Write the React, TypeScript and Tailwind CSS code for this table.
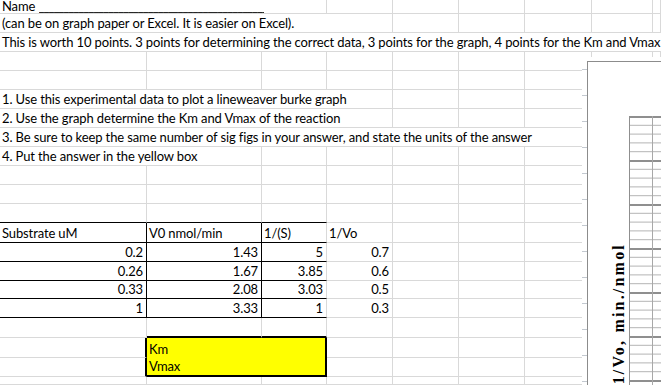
import React from "react";

// column widths, A..I
const W = ["w-[147px]", "w-[115px]", "w-[65px]", "w-[66px]", "w-[66px]", "w-[66px]", "w-[67px]", "w-[61px]", "flex-1"];

type Edge = "g" | "k" | "k2" | "n";
type CellSpec = { t?: React.ReactNode; a?: "l" | "r"; r?: Edge; b?: Edge; y?: boolean; tight?: boolean };
type RowSpec = { h: string; c: Record<number, CellSpec> };

const rightCls: Record<Edge, string> = {
  g: "border-r border-r-[#d9d9d9]",
  k: "border-r border-r-black",
  k2: "border-r-2 border-r-black",
  n: "",
};
const bottomCls: Record<Edge, string> = {
  g: "border-b border-b-[#d9d9d9]",
  k: "border-b border-b-black",
  k2: "border-b-2 border-b-black",
  n: "",
};

// hide the first n column lines (text runs over them)
const over = (n: number, first: CellSpec): Record<number, CellSpec> => {
  const c: Record<number, CellSpec> = { 0: { ...first, r: "n" } };
  for (let i = 1; i < n; i++) c[i] = { r: "n" };
  return c;
};

const tbl = (i: number): CellSpec => ({ b: "k", r: i < 2 ? "k" : "g" });

const rows: RowSpec[] = [
  {
    h: "h-[14px]",
    c: over(2, {
      tight: true,
      t: (
        <>
          Name{" "}
          <span className="inline-block w-[225px] overflow-x-clip tracking-[-1px] align-baseline">
            ____________________________________________________
          </span>
        </>
      ),
    }),
  },
  { h: "h-[19px]", c: over(3, { t: "(can be on graph paper or Excel. It is easier on Excel)." }) },
  {
    h: "h-[19px]",
    c: over(9, {
      t: "This is worth 10 points. 3 points for determining the correct data, 3 points for the graph, 4 points for the Km and Vmax",
    }),
  },
  { h: "h-[19px]", c: {} },
  { h: "h-[19px]", c: {} },
  { h: "h-[19px]", c: over(3, { t: "1. Use this experimental data to plot a lineweaver burke graph" }) },
  { h: "h-[19px]", c: over(3, { t: "2. Use the graph determine the Km and Vmax of the reaction" }) },
  {
    h: "h-[19px]",
    c: over(6, { t: "3. Be sure to keep the same number of sig figs in your answer, and state the units of the answer" }),
  },
  { h: "h-[19px]", c: over(1, { t: "4. Put the answer in the yellow box" }) },
  { h: "h-[19px]", c: {} },
  { h: "h-[19px]", c: {} },
  { h: "h-[19px]", c: { 0: { b: "k" }, 1: { b: "k" }, 2: { b: "k" } } },
  {
    h: "h-[20px]",
    c: {
      0: { ...tbl(0), t: "Substrate uM" },
      1: { ...tbl(1), t: "V0 nmol/min" },
      2: { ...tbl(2), t: "1/(S)" },
      3: { t: "1/Vo" },
    },
  },
  ...[
    ["0.2", "1.43", "5", "0.7", "h-[19px]"],
    ["0.26", "1.67", "3.85", "0.6", "h-[19px]"],
    ["0.33", "2.08", "3.03", "0.5", "h-[18px]"],
    ["1", "3.33", "1", "0.3", "h-[19px]"],
  ].map(
    ([s, v, is, iv, h]): RowSpec => ({
      h,
      c: {
        0: { ...tbl(0), t: s, a: "r" },
        1: { ...tbl(1), t: v, a: "r" },
        2: { ...tbl(2), t: is, a: "r" },
        3: { t: iv, a: "r" },
      },
    })
  ),
  { h: "h-[20px]", c: { 1: { b: "k2" }, 2: { b: "k2" } } },
  {
    h: "h-[20px]",
    c: { 0: { r: "k2" }, 1: { t: "Km", y: true, r: "n", b: "n" }, 2: { y: true, r: "k2", b: "n" } },
  },
  {
    h: "h-[19px]",
    c: { 0: { r: "k2" }, 1: { t: "Vmax", y: true, r: "n", b: "k2" }, 2: { y: true, r: "k2", b: "k2" } },
  },
  { h: "h-[8px]", c: {} },
];

function Cell({ w, spec }: { w: string; spec: CellSpec }) {
  const r = rightCls[spec.r ?? "g"];
  const b = bottomCls[spec.b ?? "g"];
  return (
    <div
      className={`${w} shrink-0 h-full flex items-end ${r} ${b} ${spec.y ? "bg-[#ffff00]" : ""} ${
        spec.a === "r" ? "justify-end pr-[3px]" : "pl-[2px]"
      }`}
    >
      {spec.t !== undefined && (
        <span className={`shrink-0 whitespace-nowrap ${spec.tight ? "leading-[14px]" : "leading-[16px] pb-[1px]"}`}>
          {spec.t}
        </span>
      )}
    </div>
  );
}

function GraphPaper() {
  const minor = Array.from({ length: 31 }, (_, i) => 0.5 + i * 8.8);
  return (
    <svg width="33" height="272" className="block">
      {minor.map((y, i) =>
        i % 5 === 0 ? (
          <line key={i} x1="0" x2="33" y1={y + 0.5} y2={y + 0.5} stroke="#8f8f8f" strokeWidth="2" />
        ) : (
          <line key={i} x1="0" x2="33" y1={y} y2={y} stroke="#b4b4b4" strokeWidth="1" />
        )
      )}
      <line x1="0.5" x2="0.5" y1="0" y2="272" stroke="#8f8f8f" strokeWidth="1" />
      <line x1="23.5" x2="23.5" y1="0" y2="272" stroke="#a8a8a8" strokeWidth="1" />
    </svg>
  );
}

function Chart() {
  const ticks = Array.from({ length: 13 }, (_, i) => i);
  return (
    <div className="absolute left-[582px] top-[57px] w-[79px] h-[328px] bg-white flex">
      <div className="w-[5px] flex flex-col gap-[25px] pt-[12px]">
        {ticks.map((t) => (
          <div key={t} className="h-px bg-[#c3c9d0]" />
        ))}
      </div>
      <div className="flex-1 mt-[4px] border-l border-t border-[#8c8c8c] flex overflow-hidden">
        <div className="w-[41px] shrink-0 flex flex-col justify-end items-end pr-[3px] pb-[1px]">
          <div className="[writing-mode:vertical-rl] rotate-180 font-['Liberation_Serif',serif] font-bold text-[16px] leading-[14px] tracking-[2.2px] text-black whitespace-nowrap">
            1/Vo, min./nmol
          </div>
        </div>
        <div className="pt-[54px] shrink-0">
          <GraphPaper />
        </div>
      </div>
    </div>
  );
}

export default function App() {
  return (
    <div className="relative w-[661px] h-[385px] overflow-hidden bg-white text-black font-['Lato',sans-serif] text-[13px] tracking-[-0.12px]">
      {rows.map((row, ri) => (
        <div key={ri} className={`flex ${row.h}`}>
          {W.map((w, ci) => (
            <Cell key={ci} w={w} spec={row.c[ci] ?? {}} />
          ))}
        </div>
      ))}
      <Chart />
    </div>
  );
}
